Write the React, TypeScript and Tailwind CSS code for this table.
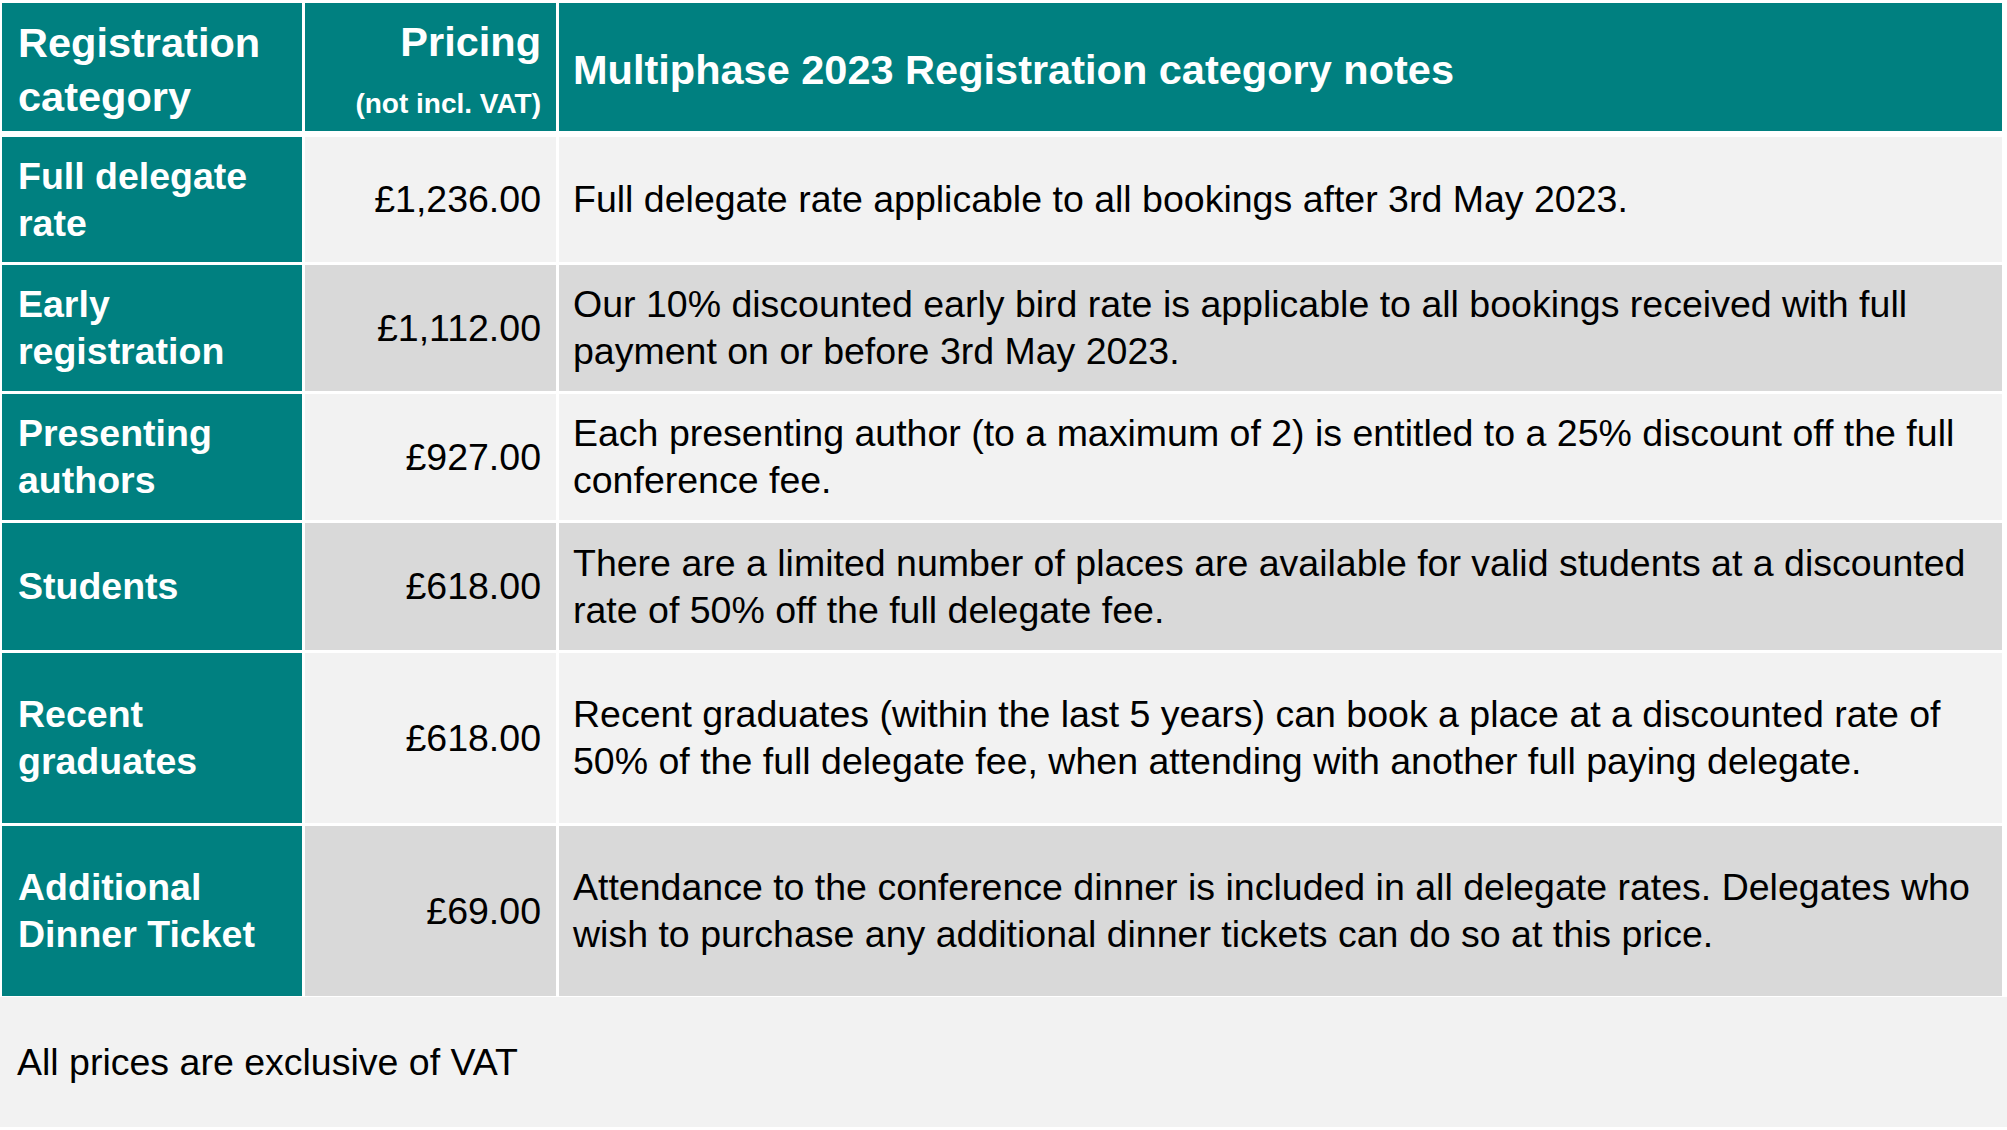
const rows = [
  {
    label: ["Full delegate", "rate"],
    price: "£1,236.00",
    notes: ["Full delegate rate applicable to all bookings after 3rd May 2023."],
    h: "h-[125px]",
    bg: "bg-[#f2f2f2]",
  },
  {
    label: ["Early", "registration"],
    price: "£1,112.00",
    notes: [
      "Our 10% discounted early bird rate is applicable to all bookings received with full",
      "payment on or before 3rd May 2023.",
    ],
    h: "h-[126px]",
    bg: "bg-[#d9d9d9]",
  },
  {
    label: ["Presenting", "authors"],
    price: "£927.00",
    notes: [
      "Each presenting author (to a maximum of 2) is entitled to a 25% discount off the full",
      "conference fee.",
    ],
    h: "h-[126px]",
    bg: "bg-[#f2f2f2]",
  },
  {
    label: ["Students"],
    price: "£618.00",
    notes: [
      "There are a limited number of places are available for valid students at a discounted",
      "rate of 50% off the full delegate fee.",
    ],
    h: "h-[127px]",
    bg: "bg-[#d9d9d9]",
  },
  {
    label: ["Recent", "graduates"],
    price: "£618.00",
    notes: [
      "Recent graduates (within the last 5 years) can book a place at a discounted rate of",
      "50% of the full delegate fee, when attending with another full paying delegate.",
    ],
    h: "h-[170px]",
    bg: "bg-[#f2f2f2]",
  },
  {
    label: ["Additional", "Dinner Ticket"],
    price: "£69.00",
    notes: [
      "Attendance to the conference dinner is included in all delegate rates. Delegates who",
      "wish to purchase any additional dinner tickets can do so at this price.",
    ],
    h: "h-[170px]",
    bg: "bg-[#d9d9d9]",
  },
];

export default function App() {
  return (
    <div className="w-[2007px] h-[1130px] bg-white font-['Liberation_Sans',Arial,sans-serif] overflow-hidden">
      <div className="pt-[3px] pl-[2px] flex flex-col">
        {/* Header */}
        <div className="grid grid-cols-[300px_251px_1443px] gap-x-[3px] h-[128px] mb-[6px] text-white font-bold">
          <div className="bg-[#008080] pl-4 pr-2 pt-[5px] flex flex-col justify-center text-[41.5px] leading-[54px]">
            <span className="whitespace-nowrap">Registration</span>
            <span>category</span>
          </div>
          <div className="bg-[#008080] px-[15px] pt-[5px] flex flex-col justify-center items-end">
            <span className="text-[41.5px] leading-[54px]">Pricing</span>
            <span className="text-[28px] leading-[40px] mt-[15px] whitespace-nowrap">(not incl. VAT)</span>
          </div>
          <div className="bg-[#008080] pl-[14px] pt-[5px] flex items-center text-[41.5px] leading-[54px]">
            Multiphase 2023 Registration category notes
          </div>
        </div>

        {/* Body */}
        <div className="flex flex-col gap-y-[3px]">
          {rows.map((r) => (
            <div
              key={r.label.join(" ")}
              className={`grid grid-cols-[300px_251px_1443px] gap-x-[3px] ${r.h} text-[37.5px] leading-[47px]`}
            >
              <div className="bg-[#008080] pl-4 flex flex-col justify-center font-bold text-white">
                {r.label.map((l) => (
                  <span key={l} className="whitespace-nowrap">{l}</span>
                ))}
              </div>
              <div className={`${r.bg} px-[15px] flex items-center justify-end text-black`}>
                {r.price}
              </div>
              <div className={`${r.bg} pl-[14px] flex flex-col justify-center text-black`}>
                {r.notes.map((n) => (
                  <span key={n} className="whitespace-nowrap">{n}</span>
                ))}
              </div>
            </div>
          ))}
        </div>
      </div>

      {/* Footer */}
      <div className="mt-[1px] h-[130px] bg-[#f2f2f2] pl-[17px] flex items-center text-[37.5px] leading-[47px] text-black">
        All prices are exclusive of VAT
      </div>
    </div>
  );
}
